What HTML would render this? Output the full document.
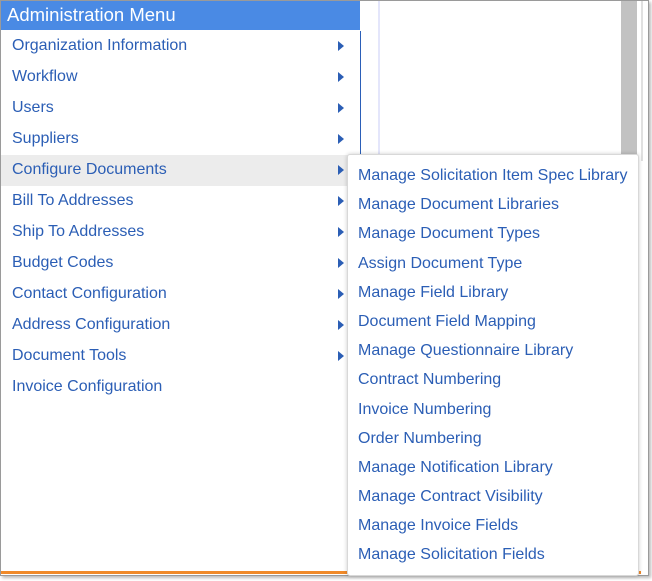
<!DOCTYPE html>
<html><head><style>
body{margin:0;width:652px;height:581px;background:#fff;position:relative;overflow:hidden;font-family:"Liberation Sans",sans-serif;}
.frame{position:absolute;left:0;top:0;width:647px;height:574px;border:1px solid #9a9a9a;box-shadow:2px 2px 3px #bbb;background:#fff;}
.hdr{position:absolute;left:1px;top:1px;width:359px;height:29px;background:#4a8ae4;color:#fff;font-size:18.5px;line-height:28px;padding-left:6px;box-sizing:border-box;}
.left{position:absolute;left:1px;top:31px;width:359px;height:539px;border-right:1px solid #2b5fb8;}
.it{height:31px;line-height:30px;font-size:16px;color:#2b5eb5;padding-left:11px;position:relative;}
.it.sel{background:#ececec;}
.ar{position:absolute;left:337px;top:10px;width:0;height:0;border-left:6px solid #2b5eb5;border-top:5px solid transparent;border-bottom:5px solid transparent;}
.vl{position:absolute;left:378px;top:1px;width:2px;height:170px;background:#e4e6fb;}
.sb{position:absolute;left:621px;top:1px;width:16px;height:160px;background:#c2c2c2;}
.sb2{position:absolute;left:641px;top:1px;width:2px;height:160px;background:#e0e0e0;}
.or{position:absolute;left:1px;top:571px;width:640px;height:3px;background:#f08a2a;}
.sub{position:absolute;left:347px;top:154px;width:290px;height:420px;background:#fff;border:1px solid #d8d8d8;border-radius:3px;box-shadow:0 0 4px rgba(0,0,0,.2);}
.s{font-size:16px;color:#2b5eb5;height:29.2px;line-height:29px;padding-left:10px;white-space:nowrap;}
</style></head><body>
<div class="frame"></div>
<div class="vl"></div><div class="sb"></div><div class="sb2"></div>
<div class="hdr">Administration Menu</div>
<div class="left">
<div class="it">Organization Information<span class="ar"></span></div>
<div class="it">Workflow<span class="ar"></span></div>
<div class="it">Users<span class="ar"></span></div>
<div class="it">Suppliers<span class="ar"></span></div>
<div class="it sel">Configure Documents<span class="ar"></span></div>
<div class="it">Bill To Addresses<span class="ar"></span></div>
<div class="it">Ship To Addresses<span class="ar"></span></div>
<div class="it">Budget Codes<span class="ar"></span></div>
<div class="it">Contact Configuration<span class="ar"></span></div>
<div class="it">Address Configuration<span class="ar"></span></div>
<div class="it">Document Tools<span class="ar"></span></div>
<div class="it">Invoice Configuration</div>
</div>
<div class="or"></div>
<div class="sub"><div style="height:6px"></div>
<div class="s">Manage Solicitation Item Spec Library</div>
<div class="s">Manage Document Libraries</div>
<div class="s">Manage Document Types</div>
<div class="s">Assign Document Type</div>
<div class="s">Manage Field Library</div>
<div class="s">Document Field Mapping</div>
<div class="s">Manage Questionnaire Library</div>
<div class="s">Contract Numbering</div>
<div class="s">Invoice Numbering</div>
<div class="s">Order Numbering</div>
<div class="s">Manage Notification Library</div>
<div class="s">Manage Contract Visibility</div>
<div class="s">Manage Invoice Fields</div>
<div class="s">Manage Solicitation Fields</div>
</div>
</body></html>
